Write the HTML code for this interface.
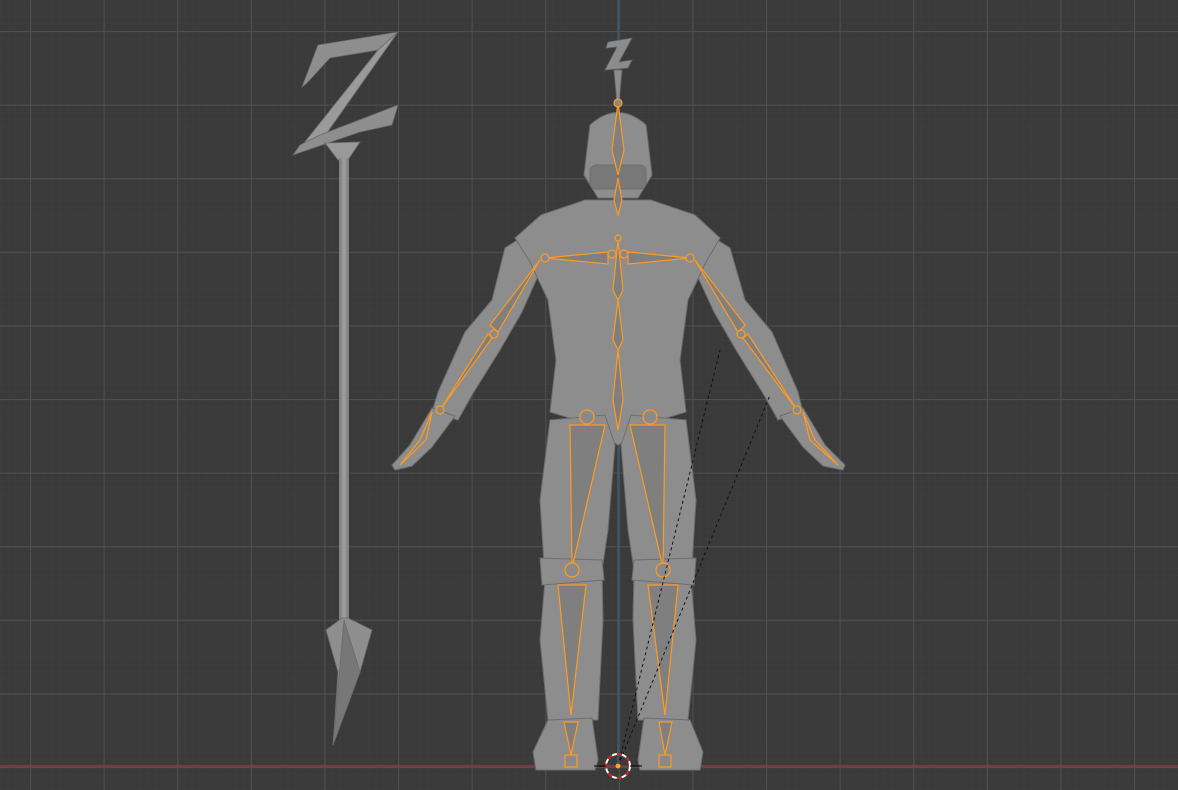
<!DOCTYPE html>
<html><head><meta charset="utf-8"><style>
html,body{margin:0;padding:0;background:#3a3a3a;}
svg{display:block}
</style></head><body>
<svg width="1178" height="790" viewBox="0 0 1178 790" xmlns="http://www.w3.org/2000/svg">
<defs>
<pattern id="minor" x="30" y="31" width="7.36" height="7.36" patternUnits="userSpaceOnUse">
<path d="M0 0H7.36M0 0V7.36" stroke="#3e3e3e" stroke-width="1" fill="none"/>
</pattern>
<pattern id="major" x="30" y="31" width="73.6" height="73.6" patternUnits="userSpaceOnUse">
<path d="M0 0.5H73.6M0.5 0V73.6" stroke="#4f4f4f" stroke-width="1.2" fill="none"/>
</pattern>
<linearGradient id="g" x1="0" x2="1"><stop offset="0" stop-color="#7a7a7a"/><stop offset=".5" stop-color="#a0a0a0"/><stop offset="1" stop-color="#7a7a7a"/></linearGradient>
</defs>
<rect width="1178" height="790" fill="#3a3a3a"/>
<rect width="1178" height="790" fill="url(#minor)"/>
<rect width="1178" height="790" fill="url(#major)"/>
<line x1="0" y1="766" x2="1178" y2="766" stroke="#9a3a44" stroke-width="1.2"/>
<line x1="618" y1="0" x2="618" y2="766" stroke="#3d5d8a" stroke-width="1.2"/>

<!-- staff -->
<g fill="#8e8e8e" stroke="#6a6a6a" stroke-width="0.8">
<path d="M302 87 L318 45 L398 32 L378 50 L330 58 L306 84 Z"/>
<path d="M378 50 L398 32 L322 140 L300 148 Z" fill="#9a9a9a"/>
<path d="M293 155 L300 145 L320 135 L398 105 L392 125 L360 132 Z"/>
<path d="M325 143 L360 142 L348 160 L338 160 Z" fill="#999"/>
<rect x="339" y="158" width="10" height="467" fill="url(#g)" stroke="none"/>
<path d="M326 630 L342 618 L348 618 L372 630 L360 672 L333 745 L338 672 Z"/>
<path d="M344 620 L360 672 L333 745 Z" fill="#777"/>
</g>

<!-- small Z -->
<g fill="#8c8c8c" stroke="#666" stroke-width="0.8">
<path d="M608 42 L632 38 L619 62 L632 60 L628 68 L605 70 L617 47 L606 48 Z"/>
<path d="M614 70 L622 70 L619 104 L617 104 Z"/>
</g>

<!-- body -->
<g fill="#8d8d8d" stroke="#6e6e6e" stroke-width="1">
<!-- arms -->
<path d="M530 232 L505 248 L492 300 L465 332 L438 392 L432 412 L458 420 L472 395 L500 350 L522 312 L545 260 Z"/>
<path d="M705 232 L730 248 L745 300 L772 332 L798 392 L803 412 L778 420 L764 395 L736 350 L714 312 L690 260 Z"/>
<path d="M432 408 L455 416 L432 447 L412 466 L395 470 L392 465 L410 445 Z"/>
<path d="M803 408 L780 416 L803 447 L823 466 L843 470 L845 465 L825 445 Z"/>
<!-- torso -->
<path d="M585 200 L651 200 L695 215 L720 238 L706 262 L688 300 L680 360 L686 412 L660 420 L618 445 L576 420 L550 412 L556 360 L548 300 L530 262 L515 238 L541 215 Z"/>
<!-- head -->
<path d="M590 125 Q618 100 646 125 L652 175 L638 198 L598 198 L584 175 Z"/>
<rect x="590" y="165" width="56" height="24" rx="6" fill="#787878"/>
<!-- legs -->
<path d="M550 420 L605 415 L615 445 L608 530 L602 570 L603 620 L598 720 L548 720 L540 640 L545 580 L540 500 Z"/>
<path d="M686 420 L631 415 L621 445 L628 530 L634 570 L633 620 L638 720 L688 720 L696 640 L691 580 L696 500 Z"/>
<path d="M540 558 L602 560 L604 580 L542 585 Z"/>
<path d="M696 558 L634 560 L632 580 L694 585 Z"/>
<!-- boots -->
<path d="M548 720 L592 718 L598 760 L595 770 L536 770 L533 752 Z"/>
<path d="M644 718 L690 720 L703 752 L700 770 L640 770 L638 760 Z"/>
</g>

<!-- bones -->
<g fill="#7f7f7f" stroke="#ff9a22" stroke-width="1.2">
<path d="M618 103 L624 150 L618 175 L612 150 Z"/>
<path d="M618 178 L622 200 L618 215 L614 200 Z"/>
<path d="M618 240 L623 290 L618 300 L613 290 Z"/>
<path d="M618 300 L623 340 L618 350 L613 340 Z"/>
<path d="M618 350 L623 400 L618 430 L613 400 Z"/>
<path d="M608 252 L545 258 L608 264 Z"/>
<path d="M628 252 L690 258 L628 264 Z"/>
<path d="M540 260 L498 332 L490 325 Z"/>
<path d="M695 260 L738 332 L745 325 Z"/>
<path d="M492 338 L440 410 L488 334 Z"/>
<path d="M743 338 L797 410 L748 334 Z"/>
<path d="M570 425 L605 425 L572 568 Z"/>
<path d="M665 425 L630 425 L663 568 Z"/>
<path d="M558 585 L586 585 L571 715 Z"/>
<path d="M648 585 L678 585 L665 715 Z"/>
<path d="M564 722 L578 722 L571 755 Z"/>
<path d="M659 722 L672 722 L665 755 Z"/>
<path d="M432 412 L420 440 L400 465 L426 440 Z" fill="none"/>
<path d="M803 412 L815 440 L838 465 L810 440 Z" fill="none"/>
</g>
<g fill="#8a8a8a" stroke="#ff9a22" stroke-width="1.2">
<circle cx="618" cy="103" r="4"/><circle cx="618" cy="238" r="3"/>
<circle cx="612" cy="254" r="4"/><circle cx="624" cy="254" r="4"/>
<circle cx="545" cy="258" r="4"/><circle cx="690" cy="258" r="4"/>
<circle cx="494" cy="334" r="4"/><circle cx="741" cy="334" r="4"/>
<circle cx="440" cy="410" r="4"/><circle cx="797" cy="410" r="4"/>
<circle cx="587" cy="417" r="7"/><circle cx="650" cy="417" r="7"/>
<circle cx="572" cy="570" r="7"/><circle cx="663" cy="570" r="7"/>
<rect x="565" y="755" width="12" height="12"/><rect x="659" y="755" width="12" height="12"/>
</g>
<g stroke="#111" stroke-dasharray="3 3" stroke-width="1">
<line x1="618" y1="766" x2="720" y2="350"/>
<line x1="618" y1="766" x2="770" y2="395"/>
</g>
<circle cx="618" cy="766" r="12" fill="none" stroke="#fff" stroke-width="2" stroke-dasharray="5 5"/>
<circle cx="618" cy="766" r="12" fill="none" stroke="#d22" stroke-width="2" stroke-dasharray="5 5" stroke-dashoffset="5"/>
<circle cx="618" cy="766" r="2.5" fill="#ffa030"/>
<line x1="594" y1="766" x2="606" y2="766" stroke="#000"/><line x1="630" y1="766" x2="642" y2="766" stroke="#000"/>
</svg>
</body></html>
